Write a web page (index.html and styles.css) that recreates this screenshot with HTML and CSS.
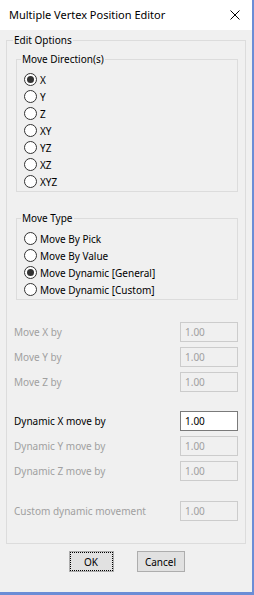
FILE: index.html
```html
<!DOCTYPE html>
<html>
<head>
<meta charset="utf-8">
<link rel="stylesheet" href="styles.css">
</head>
<body>
<div class="window">
  <div class="titlebar">
    <span class="title">Multiple Vertex Position Editor</span>
    <svg class="close" width="10" height="10" viewBox="0 0 10 10"><path d="M0.5 0.5 L9.5 9.5 M9.5 0.5 L0.5 9.5" stroke="#000" stroke-width="1" fill="none"/></svg>
  </div>
  <div class="client">
    <fieldset class="group outer">
      <legend>Edit Options</legend>
      <fieldset class="group inner dir">
        <legend>Move Direction(s)</legend>
        <label class="radio"><span class="circle checked"></span>X</label>
        <label class="radio"><span class="circle"></span>Y</label>
        <label class="radio"><span class="circle"></span>Z</label>
        <label class="radio"><span class="circle"></span>XY</label>
        <label class="radio"><span class="circle"></span>YZ</label>
        <label class="radio"><span class="circle"></span>XZ</label>
        <label class="radio"><span class="circle"></span>XYZ</label>
      </fieldset>
      <fieldset class="group inner type">
        <legend>Move Type</legend>
        <label class="radio"><span class="circle"></span>Move By Pick</label>
        <label class="radio"><span class="circle"></span>Move By Value</label>
        <label class="radio"><span class="circle checked"></span>Move Dynamic [General]</label>
        <label class="radio"><span class="circle"></span>Move Dynamic [Custom]</label>
      </fieldset>
      <div class="fields set1">
        <div class="row disabled"><span class="lbl">Move X by</span><span class="box">1.00</span></div>
        <div class="row disabled"><span class="lbl">Move Y by</span><span class="box">1.00</span></div>
        <div class="row disabled"><span class="lbl">Move Z by</span><span class="box">1.00</span></div>
      </div>
      <div class="fields set2">
        <div class="row"><span class="lbl">Dynamic X move by</span><span class="box">1.00</span></div>
        <div class="row disabled"><span class="lbl">Dynamic Y move by</span><span class="box">1.00</span></div>
        <div class="row disabled"><span class="lbl">Dynamic Z move by</span><span class="box">1.00</span></div>
      </div>
      <div class="fields set3">
        <div class="row disabled"><span class="lbl">Custom dynamic movement</span><span class="box">1.00</span></div>
      </div>
    </fieldset>
    <div class="buttons">
      <button class="btn default">OK</button>
      <button class="btn">Cancel</button>
    </div>
  </div>
</div>
</body>
</html>
```

FILE: styles.css
```css
* { box-sizing: border-box; }
html, body { margin: 0; padding: 0; }
body {
  width: 254px;
  height: 595px;
  overflow: hidden;
  font-family: "Noto Sans", "Open Sans", sans-serif;
  font-size: 10px;
  color: #000;
  background: #f0f0f0;
}
.window {
  width: 254px;
  height: 595px;
  display: flex;
  flex-direction: column;
  border-right: 2px solid #6b8dd6;
  border-bottom: 3px solid #6b8dd6;
  background: #f0f0f0;
}
.titlebar {
  height: 30px;
  background: #fff;
  display: flex;
  align-items: center;
  justify-content: space-between;
  padding: 0 12px 0 9px;
  flex: none;
}
.title {
  font-size: 11px;
  line-height: 16px;
}
.close { display: block; }
.client {
  flex: 1;
  display: flex;
  flex-direction: column;
}
.group {
  margin: 0;
  border: 1px solid #dcdcdc;
  min-width: 0;
}
.group > legend {
  line-height: 14px;
  padding: 0 1px;
  margin-left: -3px;
}
.outer {
  margin: 3px 6px 0 6px;
  padding: 5px 7px 20px 9px;
  height: 511px;
}
.inner {
  padding: 5px 0 1px 7px;
}
.type {
  margin-top: 19px;
}
.radio {
  display: flex;
  align-items: center;
  height: 17px;
}
.circle {
  width: 13px;
  height: 13px;
  border: 1px solid #333;
  border-radius: 50%;
  background: #fff;
  margin-right: 3px;
  display: flex;
  align-items: center;
  justify-content: center;
  flex: none;
}
.circle.checked::after {
  content: "";
  width: 7px;
  height: 7px;
  border-radius: 50%;
  background: #333;
}
.fields {
  display: flex;
  flex-direction: column;
  gap: 5px;
  margin-left: -2px;
}
.set1 { margin-top: 22px; }
.set2 { margin-top: 19px; }
.set3 { margin-top: 20px; }
.row {
  display: flex;
  align-items: center;
  justify-content: space-between;
  height: 20px;
}
.box {
  width: 58px;
  height: 20px;
  border: 1px solid #7a7a7a;
  background: #fff;
  padding-left: 4px;
  line-height: 18px;
}
.row.disabled .lbl { color: #a0a0a0; }
.row.disabled .box {
  border-color: #cccccc;
  background: #f0f0f0;
  color: #a0a0a0;
}
.buttons {
  display: flex;
  justify-content: center;
  gap: 23px;
  margin-top: 7px;
  padding-left: 1px;
}
.btn {
  font-family: inherit;
  font-size: 10px;
  height: 21px;
  padding: 0;
  background: #e1e1e1;
  border: 1px solid #adadad;
  border-radius: 0;
  color: #000;
}
.btn.default {
  width: 45px;
  outline: 1px dotted #000;
  outline-offset: -2px;
}
.btn:not(.default) { width: 48px; }
```
